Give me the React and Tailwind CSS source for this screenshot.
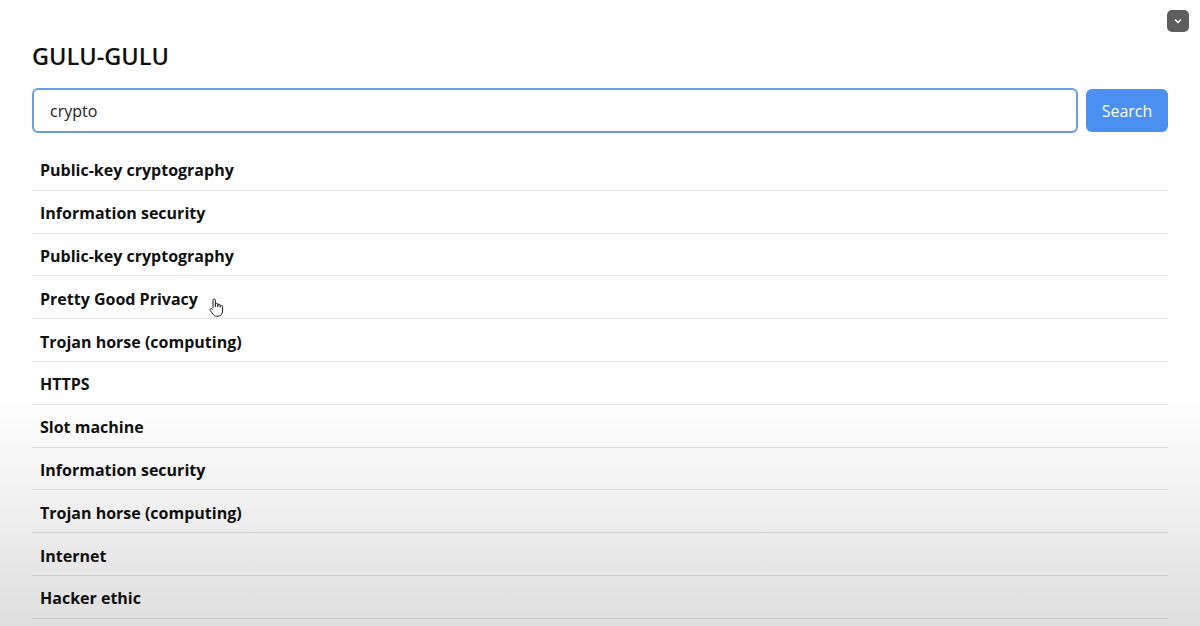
import React from "react";

const items = [
  "Public-key cryptography",
  "Information security",
  "Public-key cryptography",
  "Pretty Good Privacy",
  "Trojan horse (computing)",
  "HTTPS",
  "Slot machine",
  "Information security",
  "Trojan horse (computing)",
  "Internet",
  "Hacker ethic",
];

function Hand() {
  return (
    <svg width="16" height="20" viewBox="0 0 16 20" className="absolute left-[208px] top-[298px] pointer-events-none">
      <path
        d="M5 10V2.2a1.2 1.2 0 0 1 2.4 0V9M7.4 8V6.6a1.2 1.2 0 0 1 2.4 0V9M9.8 8.2V7.4a1.2 1.2 0 0 1 2.4 0V9.5M12.2 9V8.6a1.2 1.2 0 0 1 2.4 0v4.4c0 2.8-1.8 5.2-4.6 5.2H8.4c-1.6 0-2.6-.8-3.4-2L2.2 12.4a1.3 1.3 0 0 1 2-1.6L5 11.8"
        fill="#fff"
        stroke="#222"
        strokeWidth="1"
        strokeLinejoin="round"
      />
    </svg>
  );
}

export default function App() {
  return (
    <div className="relative w-[1200px] h-[626px] overflow-hidden bg-white" style={{ fontFamily: '"Open Sans", "Noto Sans", sans-serif' }}>
      <div className="px-8 pt-[40px]">
        <h1 className="text-[23.5px] leading-[32px] font-semibold text-[#111]">GULU-GULU</h1>
        <div className="mt-[16px] flex gap-2">
          <div className="flex-1 h-[45px] rounded-[6px] border-2 border-[#6b9de3] flex items-center px-4 text-[16px] text-[#222]">
            crypto
          </div>
          <button className="w-[82px] h-[43px] mt-[1px] rounded-[6px] bg-[#4b8ff0] text-white text-[16px]">Search</button>
        </div>
        <ul className="mt-[15px]">
          {items.map((t, i) => (
            <li key={i} className="h-[42.8px] border-b border-[#e6e6e6] flex items-center px-2 pt-[3px] text-[16px] font-bold text-[#111]">
              {t}
            </li>
          ))}
        </ul>
      </div>
      <Hand />
      <div className="absolute right-[11px] top-[10px] w-[22px] h-[22px] rounded-[5px] bg-[#5e5e5e] flex items-center justify-center">
        <svg width="10" height="10" viewBox="0 0 10 10">
          <path d="M2.5 4l2.5 2.5L7.5 4" fill="none" stroke="#fff" strokeWidth="1.6" strokeLinecap="round" strokeLinejoin="round" />
        </svg>
      </div>
      <div className="absolute inset-x-0 bottom-0 h-[230px] pointer-events-none bg-gradient-to-b from-transparent to-[rgba(0,0,0,0.13)]" />
    </div>
  );
}
